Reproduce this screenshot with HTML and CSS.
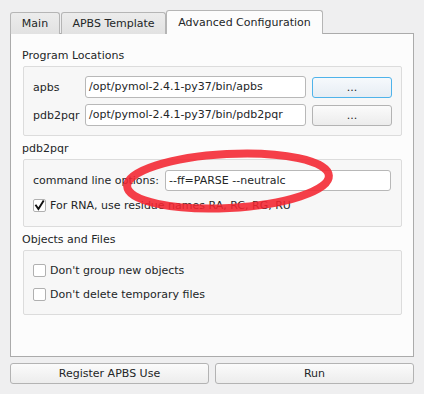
FILE: index.html
```html
<!DOCTYPE html>
<html>
<head>
<meta charset="utf-8">
<link rel="stylesheet" href="styles.css">
</head>
<body>
<div class="window">
  <div class="tabs">
    <div class="tab tab-main">Main</div>
    <div class="tab tab-tpl">APBS Template</div>
    <div class="tab tab-adv active">Advanced Configuration</div>
  </div>
  <div class="panel">
    <div class="section-title">Program Locations</div>
    <div class="group locs">
      <span class="lbl">apbs</span>
      <div class="input">/opt/pymol-2.4.1-py37/bin/apbs</div>
      <div class="btn focus">...</div>
      <span class="lbl">pdb2pqr</span>
      <div class="input">/opt/pymol-2.4.1-py37/bin/pdb2pqr</div>
      <div class="btn">...</div>
    </div>
    <div class="section-title">pdb2pqr</div>
    <div class="group stack">
      <div class="row">
        <span class="lbl">command line options:</span>
        <div class="input grow">--ff=PARSE --neutralc</div>
      </div>
      <label class="check">
        <span class="box checked"><svg viewBox="0 0 13 13" width="13" height="13"><path d="M3 6.6 L5.4 10 L10.2 2.4" fill="none" stroke="#111" stroke-width="1.9" stroke-linecap="square"/></svg></span>
        <span>For RNA, use residue names RA, RC, RG, RU</span>
      </label>
    </div>
    <div class="section-title">Objects and Files</div>
    <div class="group stack checks">
      <label class="check"><span class="box"></span><span>Don't group new objects</span></label>
      <label class="check"><span class="box"></span><span>Don't delete temporary files</span></label>
    </div>
  </div>
  <div class="actions">
    <div class="btn big">Register APBS Use</div>
    <div class="btn big">Run</div>
  </div>
  <svg class="annot" width="424" height="394" viewBox="0 0 424 394">
    <ellipse cx="228" cy="181" rx="101" ry="27" transform="rotate(-3 228 181)" fill="none" stroke="rgba(244,36,48,0.88)" stroke-width="8"/>
  </svg>
</div>
</body>
</html>
```
FILE: styles.css
```css
html, body {
  margin: 0;
  padding: 0;
  background: #efeff0;
}
body {
  font-family: "DejaVu Sans", sans-serif;
  font-size: 11px;
  color: #232627;
  width: 424px;
  height: 394px;
  overflow: hidden;
}
.window {
  padding: 0 10px 0 10px;
  width: 404px;
}
.tabs {
  display: flex;
  align-items: flex-end;
  height: 24px;
  margin-top: 10px;
  margin-bottom: -1px;
}
.tab {
  box-sizing: border-box;
  height: 22px;
  line-height: 22px;
  padding: 0;
  text-align: center;
  border: 1px solid #b5b5b5;
  border-bottom: none;
  border-radius: 3px 3px 0 0;
  background: linear-gradient(#ececec, #e2e2e2);
  white-space: nowrap;
}
.tab-main {
  width: 50px;
  margin-right: 1px;
}
.tab-tpl {
  width: 105px;
}
.tab-adv {
  width: 157px;
}
.tab.active {
  position: relative;
  z-index: 1;
  height: 24px;
  line-height: 24px;
  background: #fcfcfc;
}
.panel {
  box-sizing: border-box;
  height: 324px;
  border: 1px solid #ababab;
  background: #fcfcfc;
  padding: 15px 11px 0 12px;
  display: flex;
  flex-direction: column;
}
.section-title {
  line-height: 14px;
  height: 14px;
  margin: 0 0 3px -1px;
}
.group {
  border: 1px solid #dcdcdc;
  border-radius: 2px;
  background: #f7f7f7;
  margin-bottom: 6px;
}
.locs {
  display: grid;
  grid-template-columns: 46px 1fr 80px;
  column-gap: 6px;
  row-gap: 6px;
  padding: 9px 9px 9px 9px;
  align-items: center;
}
.lbl {
  white-space: nowrap;
}
.input {
  box-sizing: border-box;
  height: 22px;
  line-height: 20px;
  border: 1px solid #b8b8b8;
  border-radius: 3px;
  background: #ffffff;
  padding: 0 3px;
  white-space: nowrap;
  overflow: hidden;
}
.btn {
  box-sizing: border-box;
  height: 21px;
  line-height: 19px;
  border: 1px solid #b3b3b3;
  border-radius: 3px;
  background: linear-gradient(#fbfbfb, #ececec);
  text-align: center;
}
.btn.focus {
  border-color: #4fb3ea;
  background: linear-gradient(#f6f9fc, #e6edf4);
}
.stack {
  display: flex;
  flex-direction: column;
  padding: 10px 10px 12px 9px;
  gap: 6px;
}
.checks {
  padding: 11px 10px 11px 9px;
  gap: 7px;
}
.row {
  display: flex;
  align-items: center;
  gap: 6px;
}
.grow {
  flex: 1;
  height: 21px;
  line-height: 19px;
}
.check {
  display: flex;
  align-items: center;
  gap: 4px;
  height: 17px;
  white-space: nowrap;
}
.box {
  box-sizing: border-box;
  width: 13px;
  height: 13px;
  border: 1px solid #b0b0b0;
  border-radius: 2px;
  background: #ffffff;
  display: flex;
  align-items: center;
  justify-content: center;
}
.box svg {
  display: block;
  flex: none;
}
.actions {
  display: flex;
  gap: 6px;
  margin-top: 6px;
}
.big {
  flex: 1;
}
.annot {
  position: absolute;
  left: 0;
  top: 0;
  pointer-events: none;
}
```
